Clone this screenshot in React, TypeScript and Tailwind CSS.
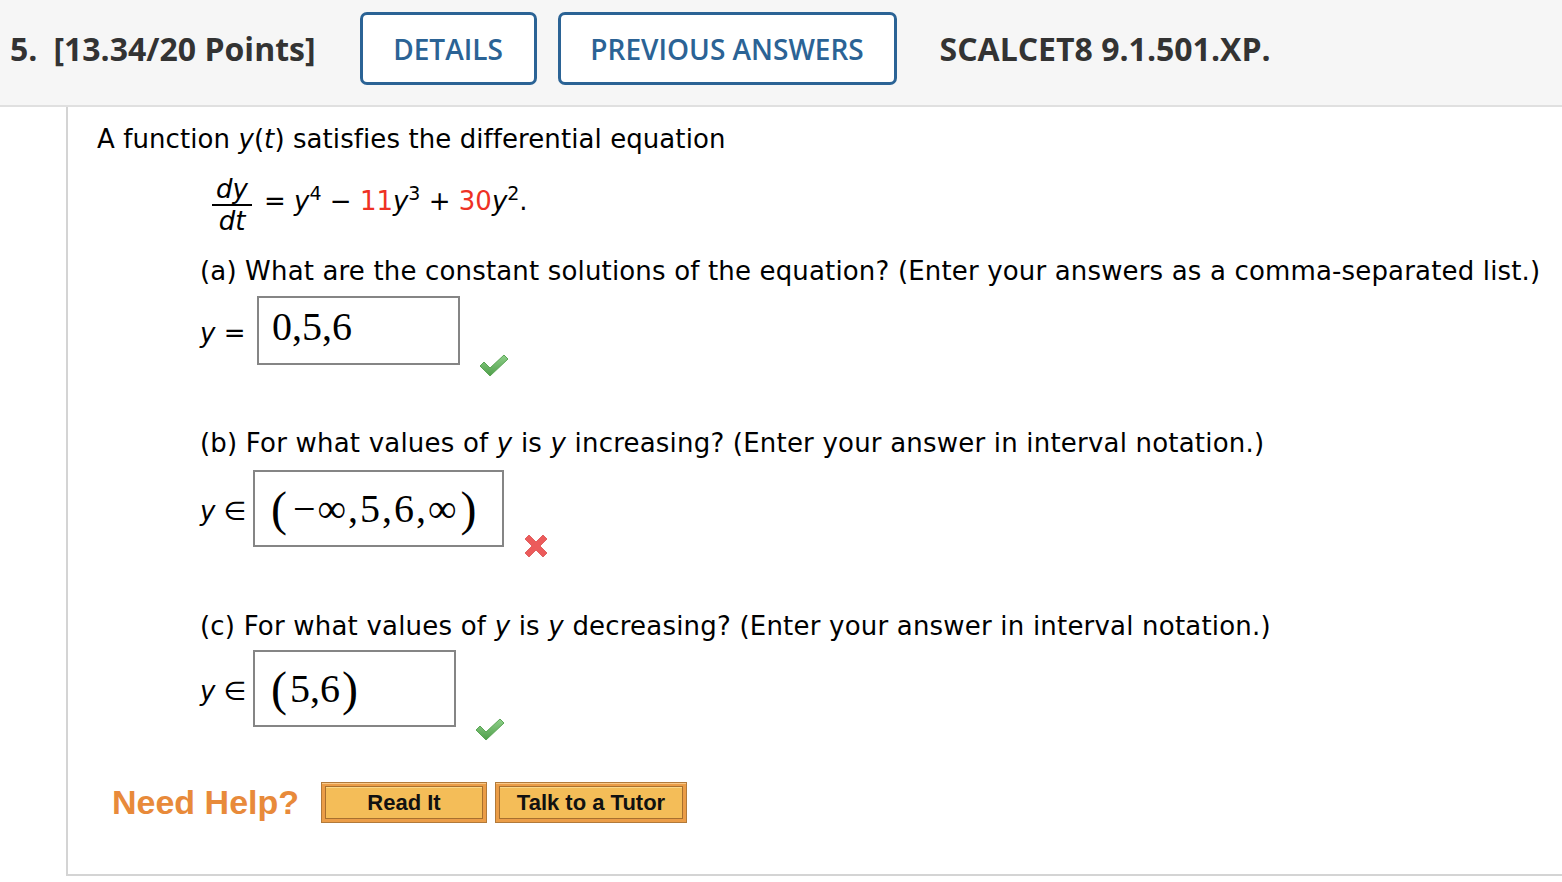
import React from "react";

const body = { fontFamily: '"DejaVu Sans", Verdana, sans-serif' };
const head = { fontFamily: '"Open Sans", "Noto Sans", sans-serif' };
const serif = { fontFamily: '"Liberation Serif", "Times New Roman", serif' };
const arial = { fontFamily: '"Liberation Sans", Arial, sans-serif' };

function Check() {
  return (
    <svg width="32" height="26" viewBox="0 0 32 26">
      <defs>
        <linearGradient id="g" x1="0" y1="0" x2="0" y2="1">
          <stop offset="0" stopColor="#8fd08a" />
          <stop offset="1" stopColor="#4f9e4a" />
        </linearGradient>
      </defs>
      <path d="M2 14 L6 10 L12 16 L26 3 L30 7 L12 24 Z" fill="url(#g)" stroke="#5aa655" strokeWidth="1" strokeLinejoin="round" />
    </svg>
  );
}

function Cross() {
  return (
    <svg width="28" height="28" viewBox="0 0 28 28">
      <path d="M3 7 L7 3 L14 10 L21 3 L25 7 L18 14 L25 21 L21 25 L14 18 L7 25 L3 21 L10 14 Z" fill="#ec5b5b" stroke="#e06060" strokeWidth="1" strokeLinejoin="round" />
    </svg>
  );
}

function Y() {
  return <i>y</i>;
}

function HelpButton({ label, w }: { label: string; w: string }) {
  return (
    <div className={`${w} h-[41px] border border-[#b27a3a] bg-[#eb9d48] p-[3px] shadow-[inset_0_1px_0_#f7c98a]`}>
      <div className="h-full border border-[#a8702e] bg-[#f4bd58] flex items-center justify-center shadow-[inset_0_1px_0_#fbd889]">
        <span className="text-[22px] font-bold text-[#111] leading-none" style={arial}>{label}</span>
      </div>
    </div>
  );
}

export default function App() {
  return (
    <div className="w-[1562px] h-[882px] bg-white overflow-hidden">
      <div className="h-[107px] bg-[#f6f6f6] border-b-2 border-[#e0e0e0] flex items-center pl-[10px] pb-[8px] text-[#333]" style={head}>
        <span className="text-[32px] font-bold">5.</span>
        <span className="text-[32px] font-bold ml-[16px]">[13.34/20 Points]</span>
        <div className="ml-[44px] w-[177px] h-[73px] border-[3px] border-[#2b6395] rounded-[7px] bg-white flex items-center justify-center text-[#2b6395] text-[28px] font-semibold">DETAILS</div>
        <div className="ml-[21px] w-[339px] h-[73px] border-[3px] border-[#2b6395] rounded-[7px] bg-white flex items-center justify-center text-[#2b6395] text-[28px] font-semibold">PREVIOUS ANSWERS</div>
        <span className="ml-[43px] text-[32px] font-bold">SCALCET8 9.1.501.XP.</span>
      </div>
      <div className="ml-[66px] h-[769px] border-l-2 border-b-2 border-[#d4d4d4] pl-[29px] text-black" style={body}>
        <div className="text-[26px] leading-[31px] pt-[17px] tracking-[0.08px]">
          A function <Y />(<i>t</i>) satisfies the differential equation
        </div>
        <div className="flex items-center ml-[115px] mt-[19px] text-[26px]">
          <div className="inline-flex flex-col items-center leading-[30px]">
            <i className="px-[2px]">dy</i>
            <div className="w-[40px] h-[2px] bg-black" />
            <i>dt</i>
          </div>
          <span className="ml-[12px] mb-[8px]">
            = <Y /><sup className="text-[19px]">4</sup> − <span className="text-[#ee3124]">11</span><Y /><sup className="text-[19px]">3</sup> + <span className="text-[#ee3124]">30</span><Y /><sup className="text-[19px]">2</sup>.
          </span>
        </div>
        <div className="pl-[103px]">
          <div className="text-[26px] leading-[31px] mt-[20px] tracking-[0.16px] whitespace-nowrap">
            (a) What are the constant solutions of the equation? (Enter your answers as a comma-separated list.)
          </div>
          <div className="flex items-start mt-[9px]">
            <span className="text-[26px] mt-[18px] w-[57px]"><Y /> =</span>
            <div className="w-[203px] h-[69px] border-2 border-[#858585] pl-[13px] pt-[8px] text-[40px] leading-[42px]" style={serif}>0,5,6</div>
            <div className="ml-[18px] mt-[56px]"><Check /></div>
          </div>
          <div className="text-[26px] leading-[31px] mt-[50px] tracking-[0.2px]">
            (b) For what values of <Y /> is <Y /> increasing? (Enter your answer in interval notation.)
          </div>
          <div className="flex items-start mt-[11px]">
            <span className="text-[26px] mt-[22px] w-[53px]"><Y /> ∈</span>
            <div className="w-[251px] h-[77px] border-2 border-[#858585] pl-[16px] flex items-center text-[40px] leading-[42px]" style={serif}>
              <span className="text-[48px] leading-none">(</span>
              <span className="ml-[6px] tracking-[2px]">−∞,5,6,∞</span>
              <span className="ml-[2px] text-[48px] leading-none">)</span>
            </div>
            <div className="ml-[18px] mt-[62px]"><Cross /></div>
          </div>
          <div className="text-[26px] leading-[31px] mt-[51px] tracking-[0.2px]">
            (c) For what values of <Y /> is <Y /> decreasing? (Enter your answer in interval notation.)
          </div>
          <div className="flex items-start mt-[8px]">
            <span className="text-[26px] mt-[22px] w-[53px]"><Y /> ∈</span>
            <div className="w-[203px] h-[77px] border-2 border-[#858585] pl-[16px] flex items-center text-[40px] leading-[42px]" style={serif}>
              <span className="text-[48px] leading-none">(</span>
              <span className="ml-[3px]">5,6</span>
              <span className="ml-[2px] text-[48px] leading-none">)</span>
            </div>
            <div className="ml-[18px] mt-[66px]"><Check /></div>
          </div>
        </div>
        <div className="flex items-center mt-[35px] ml-[15px]">
          <span className="text-[34px] font-bold text-[#e88a3a] w-[209px]" style={arial}>Need Help?</span>
          <HelpButton label="Read It" w="w-[166px]" />
          <div className="w-[8px]" />
          <HelpButton label="Talk to a Tutor" w="w-[192px]" />
        </div>
      </div>
    </div>
  );
}
